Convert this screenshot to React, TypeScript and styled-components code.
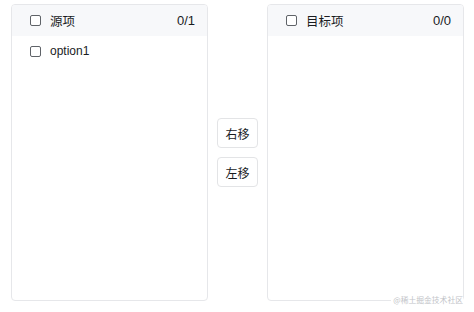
import React from 'react'
import styled, { createGlobalStyle } from 'styled-components'

const GlobalStyle = createGlobalStyle`
  html, body {
    margin: 0;
    padding: 0;
    background: #fff;
  }
  body {
    font-family: "Liberation Sans", "Noto Sans CJK SC", sans-serif;
    color: #1a1c1f;
  }
`

const Page = styled.div`
  position: relative;
  width: 474px;
  height: 312px;
  padding: 4px 0 0 11px;
  box-sizing: border-box;
`

const Wrapper = styled.div`
  display: flex;
  align-items: center;
  height: 297px;
`

const Panel = styled.div`
  width: 197px;
  height: 297px;
  box-sizing: border-box;
  border: 1px solid #e6e7ea;
  border-radius: 4px;
  display: flex;
  flex-direction: column;
  overflow: hidden;
`

const PanelHeader = styled.div`
  height: 31px;
  background: #f7f8fa;
  display: flex;
  align-items: center;
  padding: 0 12px 0 18px;
  font-size: 12.5px;
`

const Title = styled.span`
  flex: 1;
  margin-left: 9px;
`

const Count = styled.span`
  font-size: 13px;
`

const Item = styled.div`
  height: 28px;
  display: flex;
  align-items: center;
  padding: 0 0 0 18px;
  margin-top: 1px;
  font-size: 12px;
`

const Box = styled.span`
  width: 11px;
  height: 11px;
  box-sizing: border-box;
  border: 1px solid #5f6368;
  border-radius: 2px;
  background: #fff;
  flex-shrink: 0;
`

const Actions = styled.div`
  display: flex;
  flex-direction: column;
  gap: 9px;
  margin: 0 9px 0 9px;
`

const MoveButton = styled.button`
  width: 41px;
  height: 30px;
  box-sizing: border-box;
  border: 1px solid #e3e4e6;
  border-radius: 4px;
  background: #fff;
  font-family: "Noto Sans CJK SC", sans-serif;
  font-size: 12px;
  color: #1a1c1f;
  padding: 0;
  cursor: pointer;
`

const Watermark = styled.span`
  position: absolute;
  right: 11px;
  top: 294px;
  font-family: "Noto Sans CJK SC", sans-serif;
  font-size: 7.8px;
  line-height: 12px;
  color: #c2c4c8;
  background: #fff;
  padding-left: 2px;
`

const Option = styled.span`
  margin-left: 9px;
`

export default function App() {
  return (
    <>
      <GlobalStyle />
      <Page>
        <Wrapper>
          <Panel>
            <PanelHeader>
              <Box />
              <Title>源项</Title>
              <Count>0/1</Count>
            </PanelHeader>
            <Item>
              <Box />
              <Option>option1</Option>
            </Item>
          </Panel>
          <Actions>
            <MoveButton>右移</MoveButton>
            <MoveButton>左移</MoveButton>
          </Actions>
          <Panel>
            <PanelHeader>
              <Box />
              <Title>目标项</Title>
              <Count>0/0</Count>
            </PanelHeader>
          </Panel>
        </Wrapper>
        <Watermark>@稀土掘金技术社区</Watermark>
      </Page>
    </>
  )
}
